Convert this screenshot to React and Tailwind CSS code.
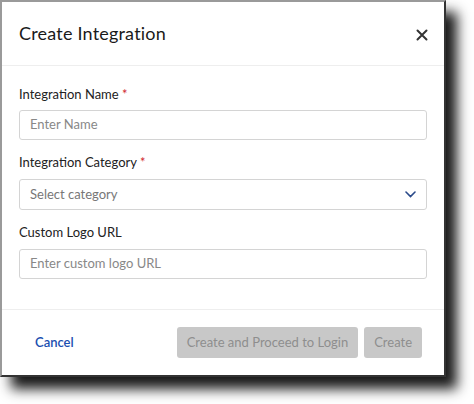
export default function App() {
  return (
    <div className="w-[474px] h-[404px] bg-white overflow-hidden" style={{ fontFamily: 'Lato, "Open Sans", sans-serif' }}>
      <div className="w-[446px] h-[377px] bg-white border-l-2 border-t-2 border-l-[#9a9a9a] border-t-[#9a9a9a] border-r-2 border-b-2 border-r-[#333] border-b-[#333] shadow-[11px_12px_12px_rgba(0,0,0,0.9)] flex flex-col">
        <div className="h-[64px] flex items-center justify-between pl-[17px] pr-[16px] border-b border-[#eeeeee]">
          <h1 className="text-[18px] text-[#1a1a1a] tracking-[0.2px]">Create Integration</h1>
          <svg width="12" height="12" viewBox="0 0 12 12" className="mt-0.5">
            <path d="M1.5 1.5L10.5 10.5M10.5 1.5L1.5 10.5" stroke="#333" strokeWidth="2" strokeLinecap="round" />
          </svg>
        </div>
        <div className="flex-1 px-[17px] pt-[20px] flex flex-col">
          <label className="text-[13px] text-[#222] leading-[16px]">
            Integration Name <span className="text-[#d0282f]">*</span>
          </label>
          <div className="mt-[8px] h-[30px] border border-[#d4d4d4] rounded-[3px] flex items-center px-[10px] text-[13px] text-[#888]">
            Enter Name
          </div>
          <label className="mt-[14px] text-[13px] text-[#222] leading-[16px]">
            Integration Category <span className="text-[#d0282f]">*</span>
          </label>
          <div className="mt-[9px] h-[31px] border border-[#d4d4d4] rounded-[3px] flex items-center justify-between px-[10px] text-[13px] text-[#777]">
            <span>Select category</span>
            <svg width="11" height="7" viewBox="0 0 11 7">
              <path d="M1 1l4.5 4.5L10 1" fill="none" stroke="#2a4a8a" strokeWidth="1.6" strokeLinecap="round" />
            </svg>
          </div>
          <label className="mt-[14px] text-[13px] text-[#222] leading-[16px]">Custom Logo URL</label>
          <div className="mt-[9px] h-[30px] border border-[#d4d4d4] rounded-[3px] flex items-center px-[10px] text-[13px] text-[#888]">
            Enter custom logo URL
          </div>
        </div>
        <div className="h-[66px] border-t border-[#eeeeee] flex items-center justify-between pl-[33px] pr-[22px]">
          <span className="text-[13px] text-[#1a4fb0] font-semibold">Cancel</span>
          <div className="flex gap-[6px]">
            <div className="h-[31px] px-[10px] bg-[#c8c8c8] rounded-[3px] flex items-center text-[13px] text-[#8e8e8e]">
              Create and Proceed to Login
            </div>
            <div className="h-[31px] px-[10px] bg-[#c8c8c8] rounded-[3px] flex items-center text-[13px] text-[#8e8e8e]">
              Create
            </div>
          </div>
        </div>
      </div>
    </div>
  );
}
